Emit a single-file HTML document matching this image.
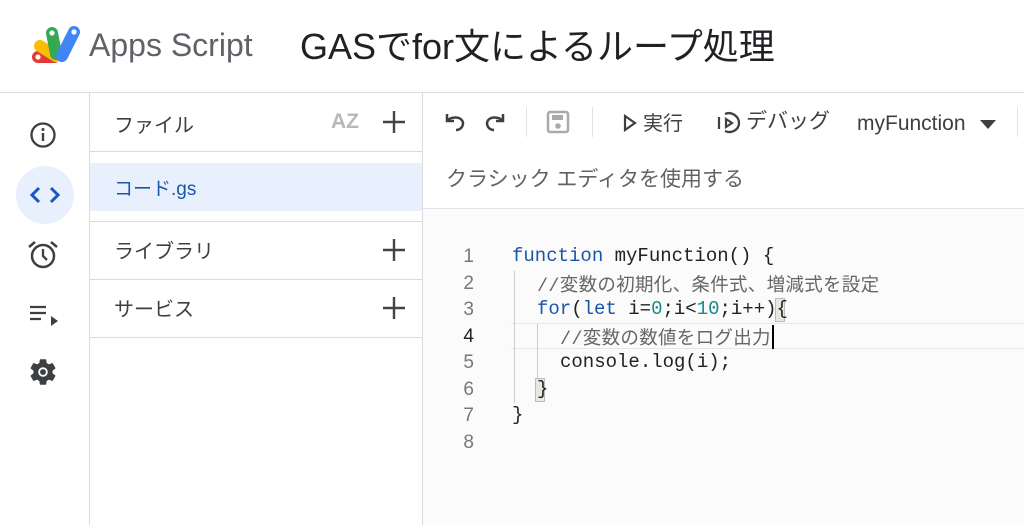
<!DOCTYPE html>
<html><head><meta charset="utf-8"><style>
*{margin:0;padding:0;box-sizing:border-box}
body{width:1024px;height:525px;overflow:hidden;background:#fff;font-family:"Liberation Sans","Noto Sans CJK JP",sans-serif;color:#3c4043;position:relative}
.a{position:absolute}
.hl{position:absolute;background:#dadce0}
.t{font-size:20px;color:#3c4043;white-space:nowrap}
.plus{position:absolute;width:26px;height:26px}
.mono{font-family:"Liberation Mono","Noto Sans CJK JP",monospace;font-size:19px;white-space:pre;color:#222}
.ln{position:absolute;left:446px;width:28px;text-align:right;font-family:"Liberation Sans",sans-serif;font-size:19px;color:#777}
.kw{color:#1a56a8}.num{color:#188a8a}.cm{color:#666;font-family:"Liberation Mono","Noto Sans CJK JP",monospace}
</style></head><body>
<svg width="0" height="0" style="position:absolute"><defs><g id="pl"><path d="M13 2V24M2 13H24" stroke="#444" stroke-width="2.4"/></g></defs></svg>
<!-- header -->
<svg class="a" style="left:30px;top:24px" width="54" height="42" viewBox="0 0 54 42">
<g stroke-linecap="round" fill="none">
<path d="M8 33 H24" stroke="#e53935" stroke-width="12"/>
<path d="M10 22 L26 32" stroke="#fbbc04" stroke-width="12"/>
<path d="M22 9 L26 30" stroke="#34a853" stroke-width="12"/>
<path d="M44 8 L32 32" stroke="#4285f4" stroke-width="12"/>
</g>
<circle cx="8" cy="33" r="2.6" fill="#fff"/><circle cx="22" cy="9" r="2.6" fill="#fff"/><circle cx="44" cy="8" r="2.6" fill="#fff"/>
</svg>
<div class="a" style="left:89px;top:27px;font-size:32px;color:#5f6368">Apps Script</div>
<div class="a" style="left:300px;top:18px;font-size:36px;color:#202124">GASでfor文によるループ処理</div>
<div class="hl" style="left:0;top:92px;width:1024px;height:1px"></div>
<!-- rail -->
<div class="hl" style="left:89px;top:93px;width:1px;height:432px"></div>
<svg class="a" style="left:28px;top:120px" width="30" height="30" viewBox="0 0 30 30"><circle cx="15" cy="15" r="11.5" fill="none" stroke="#3c4043" stroke-width="2.3"/><rect x="13.8" y="13" width="2.4" height="8" fill="#3c4043"/><circle cx="15" cy="9.5" r="1.5" fill="#3c4043"/></svg>
<div class="a" style="left:16px;top:166px;width:58px;height:58px;border-radius:50%;background:#e8f0fe"></div>
<svg class="a" style="left:28px;top:180px" width="34" height="30" viewBox="0 0 34 30"><path d="M11 8 L4 15 L11 22 M23 8 L30 15 L23 22" fill="none" stroke="#1a57c4" stroke-width="3"/></svg>
<svg class="a" style="left:26px;top:238px" width="34" height="34" viewBox="0 0 34 34"><circle cx="17" cy="18" r="11" fill="none" stroke="#3c4043" stroke-width="2.5"/><path d="M17 11 V18 L21 22" fill="none" stroke="#3c4043" stroke-width="2.3"/><path d="M3 9 L9 4 M31 9 L25 4" stroke="#3c4043" stroke-width="2.5"/></svg>
<svg class="a" style="left:28px;top:302px" width="32" height="26" viewBox="0 0 32 26"><path d="M2 5H18M2 11H18M2 17H13" stroke="#3c4043" stroke-width="2.3"/><path d="M23 14 L30 19 L23 24Z" fill="#3c4043"/></svg>
<svg class="a" style="left:27px;top:356px" width="32" height="32" viewBox="0 0 24 24"><path fill="#3c4043" d="M19.14 12.94c.04-.3.06-.61.06-.94s-.02-.64-.07-.94l2.030-1.580a.49.49 0 0 0 .12-.61l-1.92-3.32a.49.49 0 0 0-.59-.22l-2.39.96c-.5-.38-1.03-.7-1.62-.94l-.36-2.54a.48.48 0 0 0-.48-.41h-3.84a.48.48 0 0 0-.47.41l-.36 2.54c-.59.24-1.13.57-1.62.94l-2.39-.96a.48.48 0 0 0-.59.22L2.74 8.87a.47.47 0 0 0 .12.61l2.03 1.58c-.05.3-.09.63-.09.94s.02.64.07.94l-2.03 1.58a.49.49 0 0 0-.12.61l1.92 3.32c.12.22.37.29.59.22l2.39-.96c.5.38 1.03.7 1.62.94l.36 2.54c.05.24.24.41.48.41h3.84c.24 0 .44-.17.47-.41l.36-2.540c.59-.24 1.13-.56 1.62-.94l2.39.96c.22.08.47 0 .59-.22l1.92-3.32a.47.47 0 0 0-.12-.61zM12 15.6A3.6 3.6 0 1 1 12 8.4a3.6 3.6 0 0 1 0 7.2z"/><circle cx="12" cy="12" r="2.2" fill="#3c4043"/></svg>
<!-- file panel -->
<div class="hl" style="left:422px;top:93px;width:1px;height:432px"></div>
<div class="a t" style="left:114px;top:109px">ファイル</div>
<div class="a" style="left:331px;top:110px;font-size:21px;color:#b8b8b8;font-weight:bold">AZ</div>
<svg class="plus" style="left:381px;top:109px"><use href="#pl"/></svg>
<div class="hl" style="left:90px;top:151px;width:332px;height:1px"></div>
<div class="a" style="left:90px;top:163px;width:332px;height:48px;background:#e8f0fe"></div>
<div class="a t" style="left:114px;top:174px;color:#1a56a8;font-size:19px">コード.gs</div>
<div class="hl" style="left:90px;top:221px;width:332px;height:1px"></div>
<div class="a t" style="left:114px;top:235px">ライブラリ</div>
<svg class="plus" style="left:381px;top:237px"><use href="#pl"/></svg>
<div class="hl" style="left:90px;top:279px;width:332px;height:1px"></div>
<div class="a t" style="left:114px;top:293px">サービス</div>
<svg class="plus" style="left:381px;top:295px"><use href="#pl"/></svg>
<div class="hl" style="left:90px;top:337px;width:332px;height:1px"></div>
<!-- toolbar -->
<svg class="a" style="left:442px;top:110px" width="26" height="24" viewBox="0 0 26 24"><path d="M5 4 V11 H12" fill="none" stroke="#3c4043" stroke-width="2.5"/><path d="M5 11 C9 6 20 6 21 13 C21 17 18 20 14 20" fill="none" stroke="#3c4043" stroke-width="2.5"/></svg>
<svg class="a" style="left:482px;top:110px" width="26" height="24" viewBox="0 0 26 24"><path d="M21 4 V11 H14" fill="none" stroke="#3c4043" stroke-width="2.5"/><path d="M21 11 C17 6 6 6 5 13 C5 17 8 20 12 20" fill="none" stroke="#3c4043" stroke-width="2.5"/></svg>
<div class="hl" style="left:526px;top:107px;width:1px;height:30px;background:#e3e3e3"></div>
<svg class="a" style="left:546px;top:110px" width="26" height="26" viewBox="0 0 26 26"><rect x="2" y="2" width="20" height="20" rx="2" fill="none" stroke="#aaa" stroke-width="2.5"/><rect x="6" y="5" width="11" height="5" fill="#aaa"/><circle cx="12" cy="16" r="2.8" fill="#aaa"/></svg>
<div class="hl" style="left:592px;top:107px;width:1px;height:30px;background:#e3e3e3"></div>
<svg class="a" style="left:622px;top:113px" width="16" height="20" viewBox="0 0 16 20"><path d="M3 3 L13 10 L3 17Z" fill="none" stroke="#3c4043" stroke-width="2.2"/></svg>
<div class="a t" style="left:643px;top:107px">実行</div>
<svg class="a" style="left:716px;top:110px" width="26" height="26" viewBox="0 0 26 26"><path d="M9 4 C15 1 23 6 23 13 C23 20 15 24 9 21" fill="none" stroke="#3c4043" stroke-width="2.3"/><path d="M3 7 L3 19 M10 9 L16 13 L10 17Z" fill="none" stroke="#3c4043" stroke-width="2.2"/></svg>
<div class="a t" style="left:746px;top:105px;font-size:21px">デバッグ</div>
<div class="a" style="left:857px;top:112px;font-size:21px;color:#3c4043">myFunction</div>
<svg class="a" style="left:978px;top:118px" width="20" height="12" viewBox="0 0 20 12"><path d="M2 2 H18 L10 11Z" fill="#3c4043"/></svg>
<div class="hl" style="left:1017px;top:107px;width:1px;height:30px;background:#e3e3e3"></div>
<div class="a t" style="left:446px;top:163px;color:#5f6368;font-size:21px">クラシック エディタを使用する</div>
<div class="hl" style="left:423px;top:208px;width:601px;height:1px;background:#e3e3e3"></div>
<!-- code -->
<div class="a" style="left:423px;top:209px;width:601px;height:316px;background:#fbfbfb"></div>
<div class="a" style="left:511px;top:323px;width:513px;height:26px;border-top:1px solid #e6e6e6;border-bottom:1px solid #e6e6e6"></div>
<div class="a" style="left:514px;top:271px;width:1px;height:132px;background:#ccc"></div>
<div class="a" style="left:537px;top:324px;width:1px;height:55px;background:#ccc"></div>
<div class="a" style="left:535px;top:378px;width:10px;height:24px;background:#e4eadf;border:1px solid #bbb"></div>
<div class="a" style="left:775px;top:298px;width:10px;height:24px;background:#e4eadf;border:1px solid #bbb"></div>
<div class="a" style="left:772px;top:325px;width:2px;height:24px;background:#000"></div>
<div class="ln" style="top:246px">1</div>
<div class="ln" style="top:273px">2</div>
<div class="ln" style="top:299px">3</div>
<div class="ln" style="top:326px;color:#222">4</div>
<div class="ln" style="top:352px">5</div>
<div class="ln" style="top:379px">6</div>
<div class="ln" style="top:405px">7</div>
<div class="ln" style="top:432px">8</div>
<div class="a mono" style="left:512px;top:245px"><span class="kw">function</span> myFunction() {</div>
<div class="a mono cm" style="left:537px;top:271px;font-size:18.5px;letter-spacing:0.3px">//変数の初期化、条件式、増減式を設定</div>
<div class="a mono" style="left:537px;top:298px"><span class="kw">for</span>(<span class="kw">let</span> i=<span class="num">0</span>;i&lt;<span class="num">10</span>;i++){</div>
<div class="a mono cm" style="left:560px;top:324px;font-size:18.5px;letter-spacing:0.3px">//変数の数値をログ出力</div>
<div class="a mono" style="left:560px;top:351px">console.log(i);</div>
<div class="a mono" style="left:537px;top:378px">}</div>
<div class="a mono" style="left:512px;top:404px">}</div>
</body></html>
